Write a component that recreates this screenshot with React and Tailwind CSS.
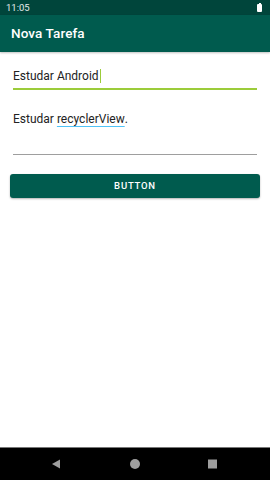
import React from "react";

export default function App() {
  return (
    <div className="w-[270px] h-[480px] flex flex-col bg-white" style={{ fontFamily: "Roboto, 'Liberation Sans', sans-serif" }}>
      <div className="h-[15px] bg-[#00453b] flex items-center justify-between pl-[6px] pr-[8px]">
        <span className="text-[9.5px] text-white/90 leading-none">11:05</span>
        <div className="flex flex-col items-center">
          <div className="w-[2px] h-[1px] bg-white" />
          <div className="w-[5px] h-[8px] bg-white rounded-[1px]" />
        </div>
      </div>
      <div className="h-[37px] bg-[#005b4e] flex items-center pl-[11px] shadow-[0_1px_2px_rgba(0,0,0,0.25)]">
        <span className="text-white text-[13.5px] font-medium tracking-[0.1px]">Nova Tarefa</span>
      </div>
      <div className="flex-1 flex flex-col px-[13px] pt-[15px]">
        <div className="flex items-center h-[18px] text-[12px] text-[#222]">
          <span>Estudar Android</span>
          <span className="w-[1px] h-[14px] bg-[#9ccc3a] ml-[1px]" />
        </div>
        <div className="h-[2px] bg-[#9ccc3a] mt-[3px]" />
        <div className="mt-[20px] text-[12px] text-[#222] h-[18px] flex items-center">
          <span>Estudar&nbsp;</span>
          <span className="underline decoration-[#4fc3f7] decoration-[1px] underline-offset-[3px]">recyclerView</span>
          <span>.</span>
        </div>
        <div className="h-[1px] bg-[#9e9e9e] mt-[26px]" />
        <button className="mt-[19px] -mx-[3px] h-[24px] rounded-[3px] bg-[#005b4e] text-white text-[9.5px] font-medium tracking-[0.8px] shadow-[0_1px_2px_rgba(0,0,0,0.3)]">
          BUTTON
        </button>
      </div>
      <div className="h-[1px] bg-[#777]" />
      <div className="h-[32px] bg-black flex items-center justify-center relative">
        <svg width="270" height="32" viewBox="0 0 270 32">
          <polygon points="52,16 60,11.5 60,20.5" fill="#9e9e9e" />
          <circle cx="135" cy="16" r="5" fill="#9e9e9e" />
          <rect x="208" y="11.5" width="9" height="9" fill="#9e9e9e" />
        </svg>
      </div>
    </div>
  );
}
